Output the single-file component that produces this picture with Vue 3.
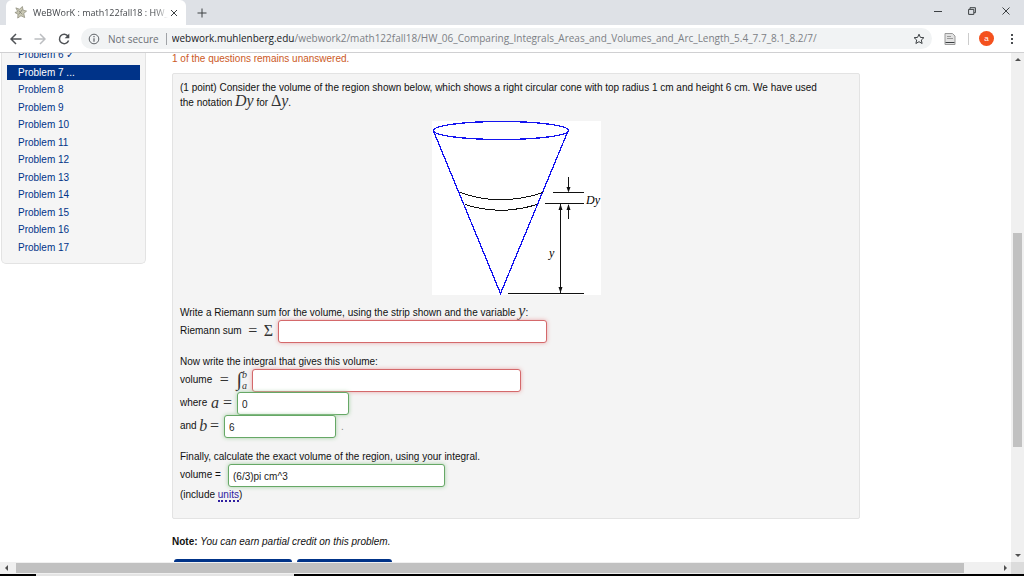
<template>
  <div class="browser">
    <header class="tab-strip">
      <div class="tab">
        <svg class="favicon" viewBox="0 0 14 14">
          <path d="M2 2l4 1.500 3-3 .8 4 3.700 1-3 2.500 1 4.500-4-2L4 13l.3-4L1 7l3-1z" fill="#c9c8b4" stroke="#8d8c7c" stroke-width=".8" />
          <path d="M5 5l4 4M9 4L5 9" stroke="#77766a" stroke-width=".7" />
        </svg>
        <span class="tab-title">WeBWorK : math122fall18 : HW_</span>
        <button class="icon-button tab-close" aria-label="Close tab">
          <svg viewBox="0 0 8 8" width="8" height="8"><path d="M1 1l6 6M7 1L1 7" /></svg>
        </button>
      </div>
      <button class="icon-button new-tab" aria-label="New tab">
        <svg viewBox="0 0 10 10" width="10" height="10"><path d="M5 .5v9M.5 5h9" /></svg>
      </button>
      <div class="window-controls">
        <button class="icon-button" aria-label="Minimize">
          <svg viewBox="0 0 8 8" width="8" height="8"><path d="M0 4.500h8" /></svg>
        </button>
        <button class="icon-button" aria-label="Restore">
          <svg viewBox="0 0 8 8" width="8" height="8"><path d="M.6 2.400h5.200v5H.6zM2 2V.7h5.400v5H6" /></svg>
        </button>
        <button class="icon-button" aria-label="Close">
          <svg viewBox="0 0 8 8" width="8" height="8"><path d="M.5.5l7 7M7.500.5l-7 7" /></svg>
        </button>
      </div>
    </header>

    <nav class="toolbar">
      <button class="icon-button nav-button" aria-label="Back">
        <svg viewBox="0 0 12 12" width="12" height="12"><path d="M11.500 6H1.200M6 1L1 6l5 5" /></svg>
      </button>
      <button class="icon-button nav-button disabled" aria-label="Forward">
        <svg viewBox="0 0 12 12" width="12" height="12"><path d="M.5 6h10.300M6 1l5 5-5 5" /></svg>
      </button>
      <button class="icon-button nav-button" aria-label="Reload">
        <svg viewBox="0 0 12 12" width="12" height="12">
          <path d="M10 3.200A4.700 4.700 0 1 0 10.600 7.500" />
          <path d="M11.300.6v4.600H6.700z" class="solid" />
        </svg>
      </button>
      <div class="address">
        <svg class="info" viewBox="0 0 12 12">
          <circle cx="6" cy="6" r="4.800" fill="none" stroke="#5f6368" />
          <path d="M6 5.200v3.500M6 3v1.200" stroke="#5f6368" stroke-width="1.200" />
        </svg>
        <span class="security">Not secure</span>
        <span class="url"><b>webwork.muhlenberg.edu</b>/webwork2/math122fall18/HW_06_Comparing_Integrals_Areas_and_Volumes_and_Arc_Length_5.4_7.7_8.1_8.2/7/</span>
        <button class="icon-button star" aria-label="Bookmark">
          <svg viewBox="0 0 12 12" width="12" height="12">
            <path d="M6 1.200l1.400 3.200 3.500.3-2.600 2.300.8 3.500L6 8.700l-3.100 1.800.8-3.500L1.100 4.700l3.500-.3z" />
          </svg>
        </button>
      </div>
      <div class="extensions">
        <button class="icon-button" aria-label="Reader">
          <svg viewBox="0 0 12 12" width="12" height="12">
            <path d="M1 .5h7.500L11 3v8.500H1z" class="sheet" />
            <path d="M3 3.500h4M3 5.500h6" class="sheet" />
            <path d="M1.500 9.500h9" />
          </svg>
        </button>
        <span class="divider"></span>
        <button class="avatar">a</button>
        <button class="icon-button" aria-label="Menu">
          <svg viewBox="0 0 4 12" width="4" height="12">
            <path d="M1 1h2v2H1zM1 5h2v2H1zM1 9h2v2H1z" class="solid" />
          </svg>
        </button>
      </div>
    </nav>

    <div class="viewport">
      <div class="page">
        <aside class="sidebar">
          <ul>
            <li v-for="p in problems" :key="p.number">
              <a href="#" :class="{ active: p.number === current }">Problem {{ p.number }}{{ p.mark }}</a>
            </li>
          </ul>
        </aside>

        <main class="main">
          <p class="warning">1 of the questions remains unanswered.</p>

          <section class="problem">
            <p>
              (1 point) Consider the volume of the region shown below, which shows a right circular cone with top radius 1 cm and height 6 cm. We have used<br>
              the notation <i class="math">Dy</i> for <span class="math">Δ<i>y</i></span>.
            </p>

            <svg class="figure" viewBox="0 0 169 174" role="img" aria-label="Cone with a horizontal strip">
              <rect width="169" height="174" fill="#fff" />
              <g fill="none" stroke="#1414f0" stroke-width="1.300" shape-rendering="crispEdges">
                <ellipse cx="69" cy="9.500" rx="67.500" ry="9" />
                <path d="M1.500 10L68.500 172.500 136 10" />
              </g>
              <g fill="none" stroke="#111" stroke-width="1" shape-rendering="crispEdges">
                <path d="M28 71.500Q68 86 111 71.500M33 83.500Q69 95 105 83.500" />
                <path d="M121 71.500h31M113 82.500h39M76 172.500h76" />
                <path d="M128.500 83v89M136.500 56v14M136.500 84v14" />
              </g>
              <path d="M134.500 66h4l-2 5.500zM134.500 89h4l-2-6zM126.500 89h4l-2-6zM126.500 166h4l-2 6z" fill="#111" />
              <text x="154" y="83">Dy</text>
              <text x="117" y="136">y</text>
            </svg>

            <p class="step">Write a Riemann sum for the volume, using the strip shown and the variable <i class="math">y</i>:</p>
            <div class="row">
              <label for="riemann" class="label-riemann">Riemann sum <span class="math">=</span><span class="math">Σ</span></label>
              <input id="riemann" v-model="answers.riemann" type="text" class="wide wrong">
            </div>

            <p class="step">Now write the integral that gives this volume:</p>
            <div class="row">
              <label for="integral" class="label-integral">
                volume <span class="math">=</span>
                <span class="integral">∫<span class="limits"><i>b</i><i>a</i></span></span>
              </label>
              <input id="integral" v-model="answers.integral" type="text" class="wide wrong">
            </div>
            <div class="row">
              <label for="lower" class="label-lower">where <i class="math">a</i><span class="math">=</span></label>
              <input id="lower" v-model="answers.lower" type="text" class="short right">
            </div>
            <div class="row">
              <label for="upper" class="label-upper">and <i class="math">b</i><span class="math">=</span></label>
              <input id="upper" v-model="answers.upper" type="text" class="short right">
              <span class="period">.</span>
            </div>

            <p class="step">Finally, calculate the exact volume of the region, using your integral.</p>
            <div class="row">
              <label for="volume" class="label-volume">volume =</label>
              <input id="volume" v-model="answers.volume" type="text" class="medium right">
            </div>
            <p>(include <a href="#" class="units">units</a>)</p>
          </section>

          <p class="note"><b>Note:</b> <i>You can earn partial credit on this problem.</i></p>
          <div class="actions">
            <button class="action preview" aria-label="Preview My Answers"></button>
            <button class="action submit" aria-label="Submit Answers"></button>
          </div>
        </main>
      </div>

      <div class="scroll-y">
        <span class="arrow up"></span>
        <div class="track"><div class="thumb"></div></div>
        <span class="arrow down"></span>
      </div>
    </div>

    <div class="scroll-x">
      <span class="arrow left"></span>
      <div class="track"><div class="thumb"></div></div>
      <span class="arrow forward"></span>
      <span class="corner"></span>
    </div>
    <footer class="taskbar"><span></span></footer>
  </div>
</template>

<script setup>
import { reactive } from 'vue'

const current = 7
const marks = { 6: ' ✓', 7: ' ...' }

const problems = Array.from({ length: 12 }, (_, i) => ({
  number: i + 6,
  mark: marks[i + 6] || ''
}))

const answers = reactive({
  riemann: '',
  integral: '',
  lower: '0',
  upper: '6',
  volume: '(6/3)pi cm^3'
})
</script>

<style>
body {
  margin: 0;
  background: #fff;
}
</style>

<style scoped>
* {
  box-sizing: border-box;
}
.browser {
  display: flex;
  flex-direction: column;
  height: 100vh;
  overflow: hidden;
  font-family: "Liberation Sans", Arial, sans-serif;
  font-size: 10px;
  line-height: 15px;
  color: #111;
}
p,
ul {
  margin: 0;
  padding: 0;
}
svg {
  display: block;
}
button {
  padding: 0;
  border: 0;
  font-family: inherit;
}
.icon-button {
  display: flex;
  align-items: center;
  justify-content: center;
  background: none;
}
.icon-button svg {
  fill: none;
  stroke: #3c4043;
  stroke-width: 1;
}
.icon-button .solid {
  fill: #4a4d51;
  stroke: none;
}
.icon-button .sheet {
  fill: #e2e2e2;
  stroke: #9a9a9a;
}

/* tabs */
.tab-strip {
  display: flex;
  flex: none;
  align-items: center;
  height: 25px;
  background: #dee1e6;
}
.tab {
  display: flex;
  align-items: center;
  width: 180px;
  height: 25px;
  margin-left: 6px;
  padding: 0 8px;
  border-radius: 6px 6px 0 0;
  background: #fff;
}
.favicon {
  flex: none;
  width: 13px;
  height: 13px;
  margin-right: 6px;
}
.tab-title {
  flex: 1;
  overflow: hidden;
  white-space: nowrap;
  font-family: "Open Sans", sans-serif;
  font-size: 9px;
  color: #45484c;
  mask-image: linear-gradient(to right, #000 90%, transparent);
}
.tab-close {
  width: 8px;
  margin-left: 2px;
}
.new-tab {
  width: 32px;
}
.window-controls {
  display: flex;
  gap: 26px;
  margin-left: auto;
  padding: 0 14px 4px 0;
}

/* toolbar */
.toolbar {
  display: flex;
  flex: none;
  align-items: center;
  height: 28px;
  padding: 0 8px 0 4px;
  border-bottom: 1px solid #d0d0d2;
  background: #fff;
}
.nav-button {
  width: 24px;
}
.nav-button svg {
  stroke: #505357;
  stroke-width: 1.5;
}
.nav-button.disabled svg {
  stroke: #bcbec1;
}
.address {
  display: flex;
  flex: 1;
  align-items: center;
  min-width: 0;
  height: 21px;
  margin-left: 5px;
  padding: 0 7px;
  border-radius: 11px;
  background: #f1f3f4;
  font-family: "Open Sans", sans-serif;
  font-size: 10px;
  white-space: nowrap;
}
.info {
  flex: none;
  width: 12px;
  height: 12px;
}
.security {
  margin-left: 8px;
  padding-right: 7px;
  border-right: 1px solid #a0a3a7;
  line-height: 12px;
  color: #6b6f74;
}
.url {
  flex: 1;
  margin-left: 5px;
  overflow: hidden;
  color: #7c8085;
}
.url b {
  font-weight: normal;
  color: #202124;
}
.extensions {
  display: flex;
  align-items: center;
  gap: 10px;
  padding: 0 2px 0 12px;
}
.divider {
  width: 1px;
  height: 12px;
  margin-left: 2px;
  background: #ccc;
}
.avatar {
  width: 15px;
  height: 15px;
  border-radius: 50%;
  background: #f4511e;
  color: #fff;
  font-size: 8px;
  line-height: 15px;
}
.extensions .icon-button:last-child {
  margin-left: 6px;
}

/* page */
.viewport {
  display: flex;
  flex: 1;
  min-height: 0;
}
.page {
  display: flex;
  flex: 1;
  align-items: flex-start;
  gap: 26px;
  min-width: 0;
  padding: 0 151px 0 1px;
  overflow: hidden;
}
.sidebar {
  flex: none;
  width: 145px;
  padding: 0 5px 7px;
  border: 1px solid #e3e3e3;
  border-top: 0;
  border-radius: 0 0 5px 5px;
  background: #f5f5f5;
}
.sidebar ul {
  display: grid;
  grid-template-rows: repeat(12, 1fr);
  align-items: center;
  height: 210px;
  margin-top: -7px;
  list-style: none;
}
.sidebar a {
  display: block;
  padding-left: 11px;
  color: #003388;
  text-decoration: none;
}
.sidebar a.active {
  background: #038;
  color: #fff;
}
.main {
  flex: 1;
  min-width: 0;
}
.warning {
  height: 20px;
  line-height: 11px;
  color: #cc5a26;
}
.problem {
  padding: 6px 7px 16px;
  border: 1px solid #e3e3e3;
  border-radius: 2px;
  background: #f4f4f4;
}
.math {
  font-family: "Liberation Serif", serif;
  font-size: 16px;
  line-height: 12px;
  color: #333;
}
.figure {
  width: 169px;
  height: 174px;
  margin: 11px auto 10px;
}
.figure text {
  font: italic 12px "Liberation Serif", serif;
}
.row + .step {
  margin-top: 11px;
}
.row {
  display: flex;
  align-items: center;
  height: 23px;
}
.row label {
  display: flex;
  flex: none;
  align-items: center;
  justify-content: space-between;
  padding: 0 5px 2px 0;
}
.label-riemann {
  width: 98px;
}
.label-integral {
  width: 72px;
}
.label-lower {
  width: 57px;
}
.label-upper {
  width: 44px;
}
.label-volume {
  width: 48px;
}
.integral {
  display: flex;
  align-items: center;
  font-family: "Liberation Serif", serif;
  font-size: 20px;
  color: #333;
}
.limits {
  display: flex;
  flex-direction: column;
  font-size: 10px;
  line-height: 11px;
}
input {
  height: 23px;
  padding: 1px 4px 0;
  border: 1px solid #888;
  border-radius: 3px;
  background: #fff;
  font-family: inherit;
  font-size: 10px;
  color: #222;
}
.wide {
  width: 269px;
}
.medium {
  width: 217px;
}
.short {
  width: 112px;
}
.wrong {
  border-color: #d4696b;
  box-shadow: 0 0 4px #e9a9aa;
}
.right {
  border-color: #66a866;
  box-shadow: 0 0 4px #a5cfa5;
}
.period {
  margin-left: 5px;
  color: #888;
}
.units {
  border-bottom: 2px dotted #3020a0;
  color: #3020a0;
  text-decoration: none;
}
.note {
  margin: 15px 0 10px;
}
.actions {
  display: flex;
  gap: 5px;
  padding-left: 2px;
}
.action {
  height: 22px;
  border-radius: 3px;
  background: #038;
}
.preview {
  width: 118px;
}
.submit {
  width: 95px;
}

/* scrollbars */
.scroll-y,
.scroll-x {
  display: flex;
  flex: none;
  align-items: center;
  background: #f0f0f0;
}
.scroll-y {
  flex-direction: column;
  width: 13px;
  padding: 5px 0;
}
.scroll-x {
  height: 12px;
  padding-left: 5px;
}
.track {
  flex: 1;
}
.thumb {
  background: #c1c1c1;
}
.scroll-y .track {
  width: 9px;
  padding-top: 172px;
}
.scroll-y .thumb {
  height: 214px;
}
.scroll-x .track {
  padding: 0 40px 0 8px;
}
.scroll-x .thumb {
  height: 10px;
}
.arrow {
  border: 3px solid transparent;
}
.up {
  border-top: 0;
  border-bottom-color: #505050;
}
.down {
  border-bottom: 0;
  border-top-color: #505050;
}
.left {
  border-left: 0;
  border-right-color: #505050;
}
.forward {
  margin-right: 4px;
  border-right: 0;
  border-left-color: #505050;
}
.corner {
  align-self: stretch;
  width: 13px;
  background: #dcdcdc;
}
.taskbar {
  flex: none;
  height: 2px;
  padding-left: 36px;
  background: #000;
}
.taskbar span {
  display: block;
  width: 258px;
  height: 2px;
  background: #e4e4e4;
}
</style>
